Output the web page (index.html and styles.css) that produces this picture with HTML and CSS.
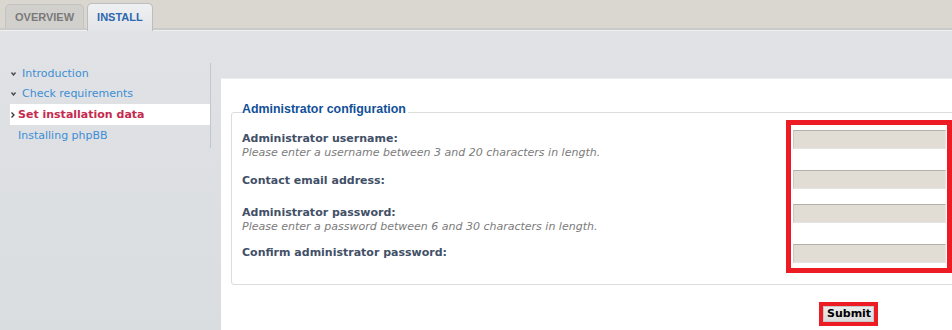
FILE: index.html
```html
<!DOCTYPE html>
<html lang="en">
<head>
    <meta charset="UTF-8">
    <title>phpBB installation</title>
    <link rel="stylesheet" href="styles.css">
</head>
<body>

    <!-- Tabs -->
    <div class="tabs">
        <a class="tab">Overview</a>
        <a class="tab tab-active">Install</a>
    </div>

    <div class="panel">
        <!-- Installation steps -->
        <nav class="menu">
            <ul>
                <li class="done">
                    <svg width="5" height="4" viewBox="0 0 5 4"><path d="M0.5 0.5 L2.5 3 L4.5 0.5" fill="none" stroke="#444" stroke-width="1.3"/></svg>
                    Introduction
                </li>
                <li class="done">
                    <svg width="5" height="4" viewBox="0 0 5 4"><path d="M0.5 0.5 L2.5 3 L4.5 0.5" fill="none" stroke="#444" stroke-width="1.3"/></svg>
                    Check requirements
                </li>
                <li class="current">
                    <svg width="4" height="6" viewBox="0 0 4 6"><path d="M0.5 0.5 L3 3 L0.5 5.5" fill="none" stroke="#333" stroke-width="1.3"/></svg>
                    Set installation data
                </li>
                <li>Installing phpBB</li>
            </ul>
        </nav>

        <!-- Form -->
        <main class="content">
            <div class="box">
                <div class="legend">Administrator configuration</div>
                <div class="fields">
                    <div class="questions">
                        <div class="q q1">
                            <label>Administrator username:</label>
                            <span class="explain">Please enter a username between 3 and 20 characters in length.</span>
                        </div>
                        <div class="q q2">
                            <label>Contact email address:</label>
                        </div>
                        <div class="q q3">
                            <label>Administrator password:</label>
                            <span class="explain">Please enter a password between 6 and 30 characters in length.</span>
                        </div>
                        <div class="q q4">
                            <label>Confirm administrator password:</label>
                        </div>
                    </div>
                    <div class="answers">
                        <input type="text">
                        <input type="text">
                        <input type="password">
                        <input type="password">
                    </div>
                </div>
            </div>

            <div class="submit-row">
                <span class="mark"><button type="button">Submit</button></span>
            </div>
        </main>
    </div>

</body>
</html>
```

FILE: styles.css
```css
/* Page */
body, html {
    margin: 0;
    padding: 0;
    height: 330px;
    overflow: hidden;
    font-family: "DejaVu Sans", Verdana, sans-serif;
    font-size: 11px;
    background-color: #dcdee1;
}

/* Tabs bar */
.tabs {
    display: flex;
    align-items: flex-end;
    gap: 3px;
    height: 28px;
    padding-left: 5px;
    background-color: #dad7d0;
    border-bottom: 2px solid #cacaca;
}

.tab {
    font-family: "Liberation Sans", Arial, sans-serif;
    font-weight: bold;
    font-size: 11px;
    text-transform: uppercase;
    color: #7a7a7a;
    background-color: #d1d0cc;
    border: 1px solid #c4c3bf;
    border-bottom: none;
    border-radius: 5px 5px 0 0;
    height: 23px;
    line-height: 24px;
    padding: 0 9px;
}

.tab-active {
    color: #2b68b0;
    background: linear-gradient(#eef0f2, #e2e4e7);
    border-color: #bdbdbd;
    height: 27px;
    line-height: 26px;
    margin-bottom: -3px;
    position: relative;
}

/* Panel */
.panel {
    display: flex;
    align-items: flex-start;
    height: 299px;
    border-top: 1px solid #eef0f2;
    background: linear-gradient(#e0e2e5, #dadde0);
}

/* Step menu */
.menu {
    flex-shrink: 0;
    width: 211px;
    margin-top: 32px;
}

.menu ul {
    list-style: none;
    margin: 0 0 0 10px;
    padding: 0 0 2px 0;
    border-right: 1px solid #c3c6ca;
}

.menu li {
    display: flex;
    align-items: center;
    height: 20.67px;
    padding-left: 8px;
    color: #3d8ed4;
    white-space: nowrap;
}

.menu li.done {
    padding-left: 1px;
}

.menu li.done svg {
    margin-right: 6px;
    margin-top: 1px;
}

.menu li.current {
    padding-left: 1px;
    background-color: #fff;
    color: #c52a4d;
    font-weight: bold;
}

.menu li.current svg {
    margin-right: 3px;
}

/* Main content */
.content {
    flex: 1;
    min-width: 0;
    overflow: hidden;
    align-self: stretch;
    margin: 47px 0 0 10px;
    padding-left: 10px;
    background-color: #fff;
    border-top: 1px solid #eceef0;
}

.box {
    width: 800px;
    margin-top: 33px;
    border: 1px solid #dcdcdc;
    border-radius: 3px;
    padding: 0 0 11px 0;
}

.legend {
    display: table;
    margin: -11px 0 0 10px;
    padding-right: 2px;
    background-color: #fff;
    font-family: "Liberation Sans", Arial, sans-serif;
    font-weight: bold;
    font-size: 12.4px;
    line-height: 14px;
    color: #115098;
}

.fields {
    display: flex;
    align-items: flex-start;
    margin-top: 4px;
    padding-left: 10px;
}

.questions {
    flex-shrink: 0;
    width: 544px;
    margin-top: 12px;
}

.q label {
    display: block;
    font-weight: bold;
    color: #425067;
    line-height: 14px;
}

.explain {
    display: block;
    font-style: italic;
    color: #7b7b7b;
    line-height: 14px;
}

.q2 { margin-top: 14px; }
.q3 { margin-top: 18px; }
.q4 { margin-top: 12px; }

/* Highlighted answers */
.answers {
    border: 5px solid #ed1c24;
    padding: 5px 1px 5px 2px;
}

.answers input {
    display: block;
    box-sizing: border-box;
    width: 153px;
    height: 19px;
    margin: 0;
    padding: 0;
    background-color: #e1ddd5;
    border: 1px solid #e6e4e0;
    border-top-color: #b3b0aa;
    border-left-color: #cdcac4;
}

.answers input + input { margin-top: 21px; }
.answers input:nth-child(3) { margin-top: 15px; }

/* Submit */
.submit-row {
    margin-top: 17px;
    padding-left: 588px;
}

.mark {
    display: inline-block;
    border: 4px solid #ed1c24;
}

.mark button {
    display: block;
    height: 16px;
    margin: 0;
    padding: 0 2px 0 3px;
    font-family: "DejaVu Sans", Verdana, sans-serif;
    font-weight: bold;
    font-size: 11px;
    line-height: 14px;
    color: #000;
    background: linear-gradient(#ececec, #dcdcdc);
    border: 1px solid #c9c9c9;
    border-radius: 0;
}
```
